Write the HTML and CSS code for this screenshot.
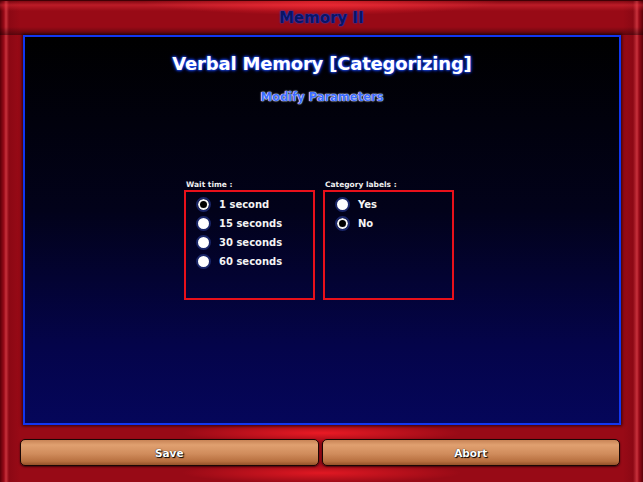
FILE: index.html
```html
<!DOCTYPE html>
<html>
<head>
<meta charset="utf-8">
<link rel="stylesheet" href="styles.css">
</head>
<body>
<div class="frame">
  <div class="titlebar">Memory II</div>
  <div class="panel">
    <h1 class="heading">Verbal Memory [Categorizing]</h1>
    <div class="subheading">Modify Parameters</div>
    <div class="groups">
      <div class="group">
        <div class="group-label">Wait time :</div>
        <div class="group-box">
          <div class="option"><span class="radio selected"></span><span class="opt-text">1 second</span></div>
          <div class="option"><span class="radio"></span><span class="opt-text">15 seconds</span></div>
          <div class="option"><span class="radio"></span><span class="opt-text">30 seconds</span></div>
          <div class="option"><span class="radio"></span><span class="opt-text">60 seconds</span></div>
        </div>
      </div>
      <div class="group">
        <div class="group-label">Category labels :</div>
        <div class="group-box">
          <div class="option"><span class="radio"></span><span class="opt-text">Yes</span></div>
          <div class="option"><span class="radio selected"></span><span class="opt-text">No</span></div>
        </div>
      </div>
    </div>
  </div>
  <div class="buttons">
    <div class="btn">Save</div>
    <div class="btn">Abort</div>
  </div>
</div>
</body>
</html>
```
FILE: styles.css
```css
html, body {
  margin: 0;
  padding: 0;
  width: 643px;
  height: 482px;
  overflow: hidden;
  background: #000;
}
.frame {
  width: 643px;
  height: 482px;
  box-sizing: border-box;
  display: flex;
  flex-direction: column;
  font-family: "DejaVu Sans", Verdana, sans-serif;
  background:
    radial-gradient(ellipse 180px 14px at 50% 0px, rgba(255,40,50,0.9), rgba(255,40,50,0) 100%),
    radial-gradient(ellipse 140px 10px at 50% 432px, rgba(255,30,40,0.8), rgba(255,30,40,0) 100%),
    radial-gradient(ellipse 140px 10px at 50% 472px, rgba(255,30,40,0.7), rgba(255,30,40,0) 100%),
    linear-gradient(90deg, #5a0008 0px, #9a0a18 4px, #c8323c 6px, #8c0814 9px, #980a16 20px, #980a16 623px, #8c0814 633px, #c8323c 637px, #9a0a18 639px, #5a0008 643px);
  border-top: 1px solid #400005;
}
.titlebar {
  height: 34px;
  display: flex;
  align-items: center;
  justify-content: center;
  font-size: 15px;
  font-weight: bold;
  color: #0a1464;
  text-shadow: 0 0 1px #2a48e8, 0 0 2px #2040d0;
  background: linear-gradient(180deg, rgba(0,0,0,0.15) 0px, rgba(255,60,70,0.35) 4px, rgba(0,0,0,0) 10px, rgba(0,0,0,0) 26px, rgba(0,0,0,0.4) 34px);
}
.panel {
  margin: 0 22px 0 23px;
  height: 390px;
  box-sizing: border-box;
  border: 2px solid #1236f0;
  background: linear-gradient(180deg, #000 0%, #02021a 45%, #04044a 80%, #05065a 100%);
  box-shadow: 0 0 3px 1px rgba(0,0,0,0.7);
  display: flex;
  flex-direction: column;
  align-items: center;
}
.heading {
  margin: 16px 0 0;
  font-size: 18px;
  font-weight: bold;
  color: #fff;
  letter-spacing: -0.2px;
  text-shadow: 0 0 2px #2050ff, 0 0 3px #2050ff, 0 0 4px #1030d0;
}
.subheading {
  margin-top: 16px;
  font-size: 11.5px;
  font-weight: bold;
  color: #3c6cff;
  text-shadow: 0 0 1px #fff, 0 0 1px #fff, 0 0 2px #c8d8ff;
}
.groups {
  margin-top: 76px;
  padding-right: 6px;
  display: flex;
  gap: 8px;
}
.group {
  display: flex;
  flex-direction: column;
}
.group-label {
  font-size: 7.5px;
  font-weight: bold;
  color: #f0f0f0;
  padding-left: 2px;
  height: 9px;
  line-height: 9px;
  margin-bottom: 1px;
}
.group-box {
  width: 131px;
  height: 110px;
  box-sizing: border-box;
  border: 2px solid #e8101a;
  padding: 5px 0 0 10px;
  display: flex;
  flex-direction: column;
  gap: 5px;
}
.option {
  display: flex;
  align-items: center;
  height: 14px;
}
.radio {
  width: 11px;
  height: 11px;
  border-radius: 50%;
  background: #fff;
  border: 2px solid #1a2668;
  flex: none;
}
.radio.selected {
  background: #000;
  box-shadow: inset 0 0 0 2px #f4f4f4;
}
.opt-text {
  margin-left: 8px;
  font-size: 10px;
  font-weight: bold;
  color: #f4f4f4;
}
.buttons {
  margin: 14px 23px 0 20px;
  height: 27px;
  display: flex;
  gap: 3px;
}
.btn {
  flex: 1;
  box-sizing: border-box;
  border: 1px solid #1a0604;
  border-radius: 5px;
  background: linear-gradient(180deg, #c88456 0%, #e0a070 20%, #d08c5c 55%, #b87040 85%, #945028 100%);
  box-shadow: 0 1px 2px rgba(0,0,0,0.6);
  display: flex;
  align-items: center;
  justify-content: center;
  font-size: 10.5px;
  font-weight: bold;
  color: #fff;
  text-shadow: 1px 1px 1px #000, 0 0 1px #000;
}
```
